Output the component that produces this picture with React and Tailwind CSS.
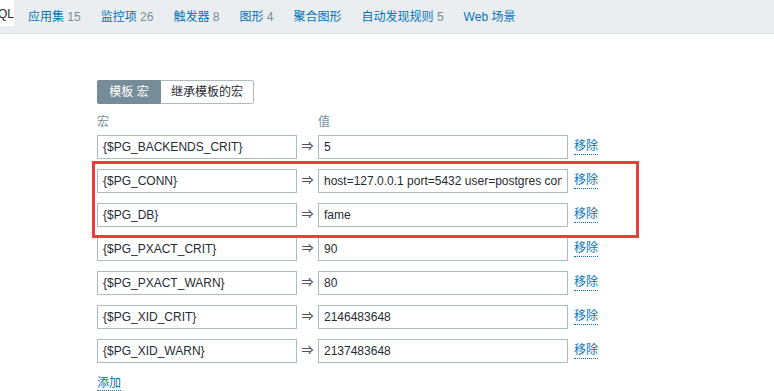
import React from 'react';

const tabs = [
  { name: '应用集', count: '15' },
  { name: '监控项', count: '26' },
  { name: '触发器', count: '8' },
  { name: '图形', count: '4' },
  { name: '聚合图形', count: '' },
  { name: '自动发现规则', count: '5' },
  { name: 'Web 场景', count: '' },
];

const macros = [
  ['{$PG_BACKENDS_CRIT}', '5'],
  ['{$PG_CONN}', 'host=127.0.0.1 port=5432 user=postgres connect_timeout=10'],
  ['{$PG_DB}', 'fame'],
  ['{$PG_PXACT_CRIT}', '90'],
  ['{$PG_PXACT_WARN}', '80'],
  ['{$PG_XID_CRIT}', '2146483648'],
  ['{$PG_XID_WARN}', '2137483648'],
];

const font = { fontFamily: '"Liberation Sans", Arial, "Noto Sans CJK SC", sans-serif' };

export default function App() {
  return (
    <div className="relative w-[774px] h-[391px] overflow-hidden bg-white text-[12px] text-[#1f2c33]" style={font}>
      {/* top tab strip */}
      <div className="flex items-start h-[34px] bg-[#ebeef0] border-b border-[#dfe4e7]">
        <div className="w-[14px] h-[26px] bg-white overflow-hidden flex justify-end items-center pt-[1px]">
          <span className="whitespace-nowrap text-[#1f2c33]">SQL</span>
        </div>
        <div className="flex ml-[4px] h-[33px] items-center">
          {tabs.map((t) => (
            <div key={t.name} className="px-[10px] whitespace-nowrap text-[#0275b8]">
              {t.name}
              {t.count && <span className="text-[#768d99]"> {t.count}</span>}
            </div>
          ))}
        </div>
      </div>

      <div className="pl-[97px] pt-[46px]">
        {/* tab buttons */}
        <div className="flex h-[24px]">
          <div className="w-[64px] flex items-center justify-center bg-[#768d99] text-white rounded-l-[2px] border border-[#768d99]">
            模板 宏
          </div>
          <div className="w-[93px] flex items-center justify-center bg-white border border-l-0 border-[#acbbc2] rounded-r-[2px]">
            继承模板的宏
          </div>
        </div>

        {/* column labels */}
        <div className="flex pt-[10px] pb-[4px] leading-[17px] text-[#768d99]">
          <div className="w-[221px]">宏</div>
          <div>值</div>
        </div>

        {/* macro rows */}
        <div className="flex flex-col gap-[10px]">
          {macros.map(([m, v]) => (
            <div key={m} className="flex items-center h-[24px]">
              <input
                readOnly
                defaultValue={m}
                className="w-[200px] h-[24px] border border-[#acbbc2] px-[5px] bg-white outline-none"
              />
              <div className="w-[21px] text-center">⇒</div>
              <input
                readOnly
                defaultValue={v}
                className="w-[250px] h-[24px] border border-[#acbbc2] px-[5px] bg-white outline-none"
              />
              <span className="ml-[6px] text-[#0275b8] border-b border-dotted border-[#0275b8] leading-[15px]">移除</span>
            </div>
          ))}
        </div>

        <div className="mt-[11px]">
          <span className="text-[#0275b8] border-b border-dotted border-[#0275b8] leading-[15px]">添加</span>
        </div>
      </div>

      {/* highlight annotation */}
      <div className="absolute left-[92px] top-[161px] w-[547px] h-[77px] border-[3px] border-[#f13b3b]" />
    </div>
  );
}
